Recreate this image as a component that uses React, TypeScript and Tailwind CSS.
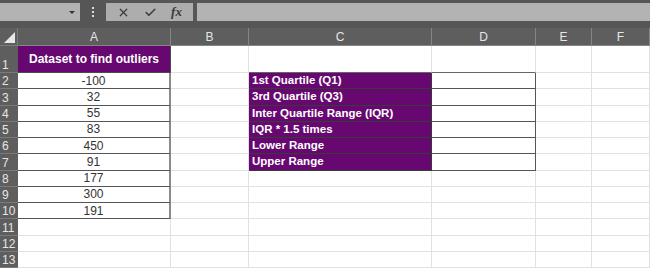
import {X, Check} from "lucide-react";

const cols = ["A", "B", "C", "D", "E", "F"];
const dataset = ["-100", "32", "55", "83", "450", "91", "177", "300", "191"];
const labels = [
  "1st Quartile (Q1)",
  "3rd Quartile (Q3)",
  "Inter Quartile Range (IQR)",
  "IQR * 1.5 times",
  "Lower Range",
  "Upper Range",
];

const grid = "border-r border-b border-[#e1e1e1]";

function Cell({row, col}: {row: number; col: number}) {
  // Column A dataset block
  if (col === 0) {
    if (row === 1) {
      return (
        <div className="bg-[#66086f] border-b border-r border-[#4a4a4a] flex items-center justify-center text-white font-bold text-[12px]">
          Dataset to find outliers
        </div>
      );
    }
    if (row >= 2 && row <= 10) {
      return (
        <div className="bg-white border-b border-r-2 border-[#555] border-r-[#8a8a8a] flex items-center justify-center text-[#333] text-[12px]">
          {dataset[row - 2]}
        </div>
      );
    }
  }
  // Column C labels
  if (col === 2 && row >= 2 && row <= 7) {
    return (
      <div className="bg-[#66086f] border-b border-r border-[#3a3a3a] flex items-center pl-[3px] text-white font-bold text-[11.5px]">
        {labels[row - 2]}
      </div>
    );
  }
  // Column D values (empty)
  if (col === 3 && row >= 2 && row <= 7) {
    return <div className="bg-white border-b border-r border-[#555]" />;
  }
  // Row 1 above label table gets dark bottom border
  if ((col === 2 || col === 3) && row === 1) {
    return <div className="bg-white border-r border-b border-r-[#e1e1e1] border-b-[#666]" />;
  }
  return <div className={`bg-white ${grid}`} />;
}

export default function App() {
  const rows = Array.from({length: 13}, (_, i) => i + 1);

  return (
    <div
      className="w-[650px] h-[268px] overflow-hidden bg-white"
      style={{fontFamily: '"Liberation Sans", Arial, sans-serif'}}
    >
      {/* Formula bar */}
      <div className="h-[28px] bg-[#565656] pt-[3px] pb-[7px] flex">
        <div className="w-[80px] bg-[#b3b3b3] flex items-center justify-end pr-[5px]">
          <span className="w-0 h-0 border-l-[3px] border-r-[3px] border-t-[3px] border-l-transparent border-r-transparent border-t-[#333]" />
        </div>
        <div className="w-[26px] flex flex-col items-center justify-center gap-[2px]">
          <span className="w-[2px] h-[2px] bg-[#ddd]" />
          <span className="w-[2px] h-[2px] bg-[#ddd]" />
          <span className="w-[2px] h-[2px] bg-[#ddd]" />
        </div>
        <div className="w-[87px] bg-[#adadad] flex items-center justify-around px-[4px] text-[#3a3a3a]">
          <X size={13} strokeWidth={2.2} />
          <Check size={13} strokeWidth={2.8} />
          <span
            className="italic text-[13px] font-bold"
            style={{fontFamily: '"Liberation Serif", serif'}}
          >
            fx
          </span>
        </div>
        <div className="w-[4px]" />
        <div className="flex-1 bg-[#b3b3b3]" />
      </div>

      {/* Sheet grid */}
      <div className="grid grid-cols-[18px_153px_78px_183px_104px_56px_1fr] grid-rows-[18px_27px_repeat(12,16.25px)]">
        {/* corner */}
        <div className="bg-[#5e5e5e] border-r border-b border-[#7a7a7a] relative">
          <span
            className="absolute right-[2px] bottom-[2px] w-0 h-0"
            style={{borderBottom: "11px solid #e8e8e8", borderLeft: "11px solid transparent"}}
          />
        </div>
        {cols.map((c) => (
          <div
            key={c}
            className="bg-[#5e5e5e] border-r border-b border-[#858585] flex items-center justify-center text-[#e6e6e6] text-[12px]"
          >
            {c}
          </div>
        ))}

        {rows.map((r) => (
          <div key={r} className="contents">
            <div className="bg-[#5e5e5e] border-b border-[#7a7a7a] flex items-end pb-[1px] pl-[2px] text-[#e6e6e6] text-[12px] leading-none">
              {r}
            </div>
            {cols.map((_, ci) => (
              <Cell key={ci} row={r} col={ci} />
            ))}
          </div>
        ))}
      </div>
    </div>
  );
}
